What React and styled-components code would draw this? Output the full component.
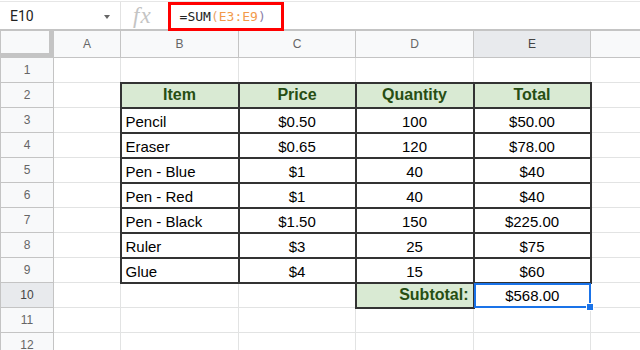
import React from 'react'
import styled, { createGlobalStyle } from 'styled-components'

const columns = [
  { key: 'corner', width: 53 },
  { key: 'A', width: 67 },
  { key: 'B', width: 118 },
  { key: 'C', width: 117 },
  { key: 'D', width: 118 },
  { key: 'E', width: 117 },
  { key: 'F', width: 50 },
]

const items = [
  ['Pencil', '$0.50', '100', '$50.00'],
  ['Eraser', '$0.65', '120', '$78.00'],
  ['Pen - Blue', '$1', '40', '$40'],
  ['Pen - Red', '$1', '40', '$40'],
  ['Pen - Black', '$1.50', '150', '$225.00'],
  ['Ruler', '$3', '25', '$75'],
  ['Glue', '$4', '15', '$60'],
]

function App() {
  return (
    <>
      <GlobalStyle />
      <Page>
        <FormulaBar>
          <NameBox>
            <span>E10</span>
            <Caret />
          </NameBox>
          <FxIcon>fx</FxIcon>
          <FormulaBox>
            <Fn>=SUM</Fn>
            <Paren>(</Paren>
            <Ref>E3:E9</Ref>
            <Paren $close>)</Paren>
          </FormulaBox>
        </FormulaBar>

        <Sheet>
          <colgroup>
            {columns.map(c => (
              <Col key={c.key} $w={c.width} />
            ))}
          </colgroup>
          <tbody>
            <HeadRow>
              <Corner />
              {['A', 'B', 'C', 'D', 'E', ''].map(l => (
                <ColLabel key={l || 'F'} $active={l === 'E'}>{l}</ColLabel>
              ))}
            </HeadRow>

            <Row>
              <RowLabel>1</RowLabel>
              <Cell /><Cell /><Cell /><Cell /><Cell /><Cell />
            </Row>

            <Row>
              <RowLabel>2</RowLabel>
              <Cell />
              <HeadCell>Item</HeadCell>
              <HeadCell>Price</HeadCell>
              <HeadCell>Quantity</HeadCell>
              <HeadCell>Total</HeadCell>
              <Cell />
            </Row>

            {items.map((r, i) => (
              <Row key={r[0]}>
                <RowLabel>{i + 3}</RowLabel>
                <Cell />
                <DataCell>{r[0]}</DataCell>
                <DataCell $align="center">{r[1]}</DataCell>
                <DataCell $align="center">{r[2]}</DataCell>
                <DataCell $align="center">{r[3]}</DataCell>
                <Cell />
              </Row>
            ))}

            <Row>
              <RowLabel $active>10</RowLabel>
              <Cell /><Cell /><Cell />
              <SubtotalCell>Subtotal:</SubtotalCell>
              <SelectedCell>$568.00</SelectedCell>
              <Cell />
            </Row>

            <Row>
              <RowLabel>11</RowLabel>
              <Cell /><Cell /><Cell /><Cell /><Cell /><Cell />
            </Row>
            <Row>
              <RowLabel>12</RowLabel>
              <Cell /><Cell /><Cell /><Cell /><Cell /><Cell />
            </Row>
          </tbody>
        </Sheet>
      </Page>
    </>
  )
}

export default App


const GlobalStyle = createGlobalStyle`
  html, body {
    margin: 0;
    background: #fff;
    overflow: hidden;
  }
  body {
    font-family: "Liberation Sans", Arial, sans-serif;
  }
`;
const Page = styled.div`
  width: 640px;
  height: 350px;
  overflow: hidden;
`;
const FormulaBar = styled.div`
  display: flex;
  align-items: center;
  height: 27px;
  margin-top: 1px;
  border-top: 1px solid #e6e6e6;
  border-bottom: 1px solid #c4c4c4;
`;
const NameBox = styled.div`
  display: flex;
  align-items: center;
  justify-content: space-between;
  box-sizing: border-box;
  width: 121px;
  height: 27px;
  padding: 0 10px 0 10px;
  border-right: 1px solid #e2e2e2;
  font-family: Roboto, "Liberation Sans", sans-serif;
  font-size: 14px;
  color: #222;
`;
const Caret = styled.span`
  width: 0;
  height: 0;
  margin-top: 2px;
  border-left: 3.5px solid transparent;
  border-right: 3.5px solid transparent;
  border-top: 4px solid #666;
`;
const FxIcon = styled.span`
  margin-left: 12px;
  font-family: "Liberation Serif", serif;
  font-style: italic;
  font-size: 23px;
  letter-spacing: 1px;
  color: #c4c4c4;
  line-height: 1;
`;
const FormulaBox = styled.div`
  position: relative;
  z-index: 1;
  align-self: flex-start;
  display: flex;
  align-items: center;
  box-sizing: border-box;
  width: 116px;
  height: 29px;
  margin-left: 16px;
  padding-left: 9px;
  border: 3px solid #ff0000;
  font-family: "DejaVu Sans Mono", "Liberation Mono", monospace;
  font-size: 13px;
  color: #222;
`;
const Fn = styled.span``;
const Paren = styled.span`
  color: ${p => (p.$close ? '#8c7fa8' : '#e9a36c')};
`;
const Ref = styled.span`
  color: #f29a4a;
`;
const Sheet = styled.table`
  border-collapse: collapse;
  table-layout: fixed;
  width: 640px;
`;
const Col = styled.col`
  width: ${p => p.$w}px;
`;
const HeadRow = styled.tr`
  height: 27px;
`;
const Row = styled.tr`
  height: 25px;
`;
const Corner = styled.th`
  padding: 0;
  background: #f8f9fa;
  border: 1px solid #c4c4c4;
  box-shadow: inset -4px -4px 0 #c4c4c4;
`;
const ColLabel = styled.th`
  padding: 0;
  background: ${p => (p.$active ? '#e8eaed' : '#f8f9fa')};
  border: 1px solid #c4c4c4;
  font-weight: normal;
  font-size: 12px;
  color: ${p => (p.$active ? '#444' : '#666')};
  text-align: center;
`;
const RowLabel = styled.td`
  padding: 0;
  background: ${p => (p.$active ? '#e8eaed' : '#f8f9fa')};
  border: 1px solid #c4c4c4;
  font-size: 12px;
  color: ${p => (p.$active ? '#444' : '#666')};
  text-align: center;
`;
const Cell = styled.td`
  padding: 0 4px 2px;
  border: 1px solid #e2e3e3;
  vertical-align: bottom;
  font-size: 15px;
  line-height: 17px;
  color: #000;
  white-space: nowrap;
`;
const DataCell = styled(Cell)`
  border: 2px solid #333;
  text-align: ${p => p.$align || 'left'};
`;
const HeadCell = styled(Cell)`
  border: 2px solid #333;
  background: #d9ead3;
  vertical-align: middle;
  padding: 0 4px;
  text-align: center;
  font-weight: bold;
  font-size: 16px;
  line-height: 18px;
  color: #274e13;
`;
const SubtotalCell = styled(HeadCell)`
  text-align: right;
`;
const SelectedCell = styled(Cell)`
  position: relative;
  text-align: center;
  vertical-align: middle;
  padding: 0 4px;

  &::after {
    content: '';
    position: absolute;
    inset: -1px -1px -1px -1px;
    border: 2px solid #1a73e8;
  }
  &::before {
    content: '';
    position: absolute;
    z-index: 1;
    right: -4px;
    bottom: -4px;
    width: 6px;
    height: 6px;
    background: #1a73e8;
    border: 1px solid #fff;
  }
`;
